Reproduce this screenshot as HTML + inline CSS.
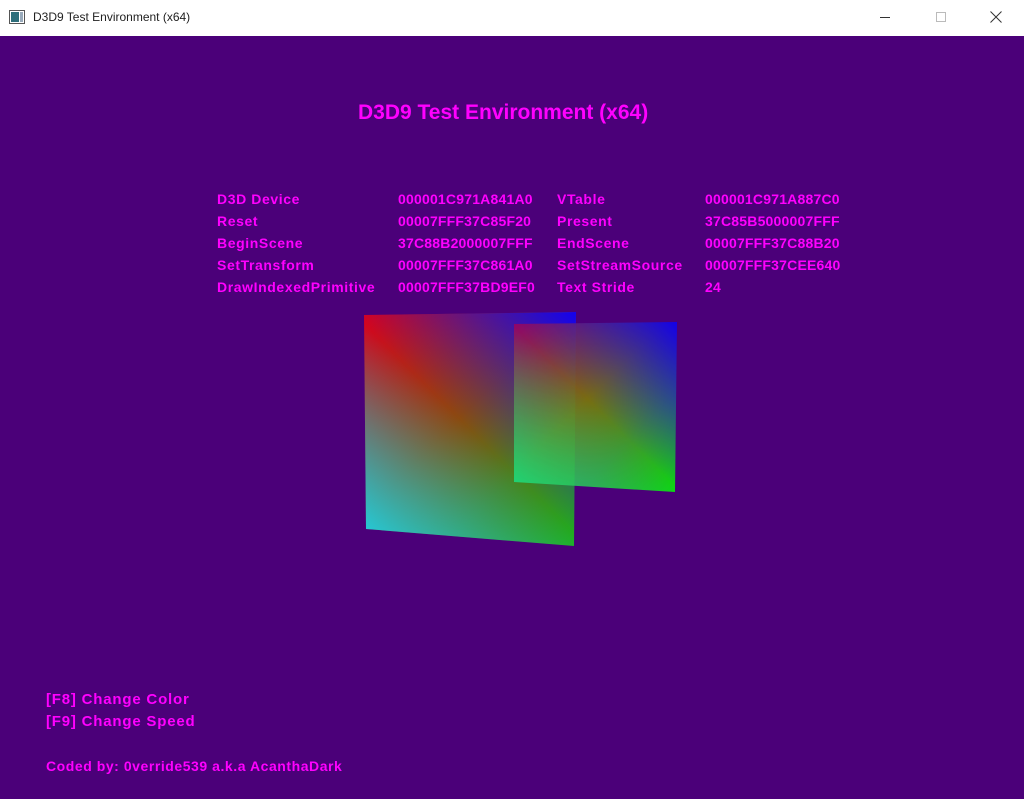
<!DOCTYPE html>
<html><head><meta charset="utf-8"><style>
*{margin:0;padding:0;box-sizing:border-box}
body{width:1024px;height:800px;overflow:hidden;background:#fff;font-family:"Liberation Sans",sans-serif;position:relative}
#tb{position:absolute;left:0;top:0;width:1024px;height:36px;background:#fff}
#tb .t{position:absolute;left:33px;top:10px;font-size:12px;color:#222}
#main{position:absolute;left:0;top:36px;width:1024px;height:763px;background:#4b0079}
.m{position:absolute;color:#ff00ff;font-weight:bold;white-space:nowrap}
.r{font-size:14px;line-height:16px;letter-spacing:0.6px}
.v{font-size:14px;line-height:16px;letter-spacing:0.2px}
.q{position:absolute}
</style></head><body>
<div id="tb">
<svg style="position:absolute;left:9px;top:10px" width="16" height="14"><rect x="0.5" y="0.5" width="15" height="13" fill="#fff" stroke="#555"/><rect x="2" y="2" width="8" height="10" fill="#2e6e7a"/><rect x="11" y="2" width="3" height="10" fill="#9ab"/></svg>
<div class="t">D3D9 Test Environment (x64)</div>
<div style="position:absolute;left:880px;top:17px;width:10px;height:1px;background:#333"></div>
<div style="position:absolute;left:936px;top:12px;width:10px;height:10px;border:1px solid #bbb"></div>
<svg style="position:absolute;left:990px;top:11px" width="12" height="12"><path d="M0.5 0.5L11.5 11.5M11.5 0.5L0.5 11.5" stroke="#333" stroke-width="1"/></svg>
</div>
<div id="main">
<div class="m" style="left:358px;top:64px;font-size:21px;line-height:26px">D3D9 Test Environment (x64)</div>

<div class="m r" style="left:217px;top:155px">D3D Device</div>
<div class="m v" style="left:398px;top:155px">000001C971A841A0</div>
<div class="m r" style="left:557px;top:155px">VTable</div>
<div class="m v" style="left:705px;top:155px">000001C971A887C0</div>

<div class="m r" style="left:217px;top:177px">Reset</div>
<div class="m v" style="left:398px;top:177px">00007FFF37C85F20</div>
<div class="m r" style="left:557px;top:177px">Present</div>
<div class="m v" style="left:705px;top:177px">37C85B5000007FFF</div>

<div class="m r" style="left:217px;top:199px">BeginScene</div>
<div class="m v" style="left:398px;top:199px">37C88B2000007FFF</div>
<div class="m r" style="left:557px;top:199px">EndScene</div>
<div class="m v" style="left:705px;top:199px">00007FFF37C88B20</div>

<div class="m r" style="left:217px;top:221px">SetTransform</div>
<div class="m v" style="left:398px;top:221px">00007FFF37C861A0</div>
<div class="m r" style="left:557px;top:221px">SetStreamSource</div>
<div class="m v" style="left:705px;top:221px">00007FFF37CEE640</div>

<div class="m r" style="left:217px;top:243px">DrawIndexedPrimitive</div>
<div class="m v" style="left:398px;top:243px">00007FFF37BD9EF0</div>
<div class="m r" style="left:557px;top:243px">Text Stride</div>
<div class="m v" style="left:705px;top:243px">24</div>

<div class="q" style="left:364px;top:276px;width:213px;height:235px;clip-path:polygon(0px 3px,212px 0px,210px 234px,2px 217px);
background:linear-gradient(225deg,rgba(20,0,240,1) 0%,rgba(20,0,240,0) 50%),linear-gradient(45deg,rgba(30,210,230,1) 0%,rgba(30,210,230,0) 50%),linear-gradient(135deg,#d80020 0%,#8a4a10 45%,#4a8020 70%,#1cb020 100%)"></div>
<div class="q" style="left:514px;top:286px;width:164px;height:171px;clip-path:polygon(0px 2px,163px 0px,161px 170px,0px 160px);opacity:0.85;
background:linear-gradient(225deg,rgba(10,0,255,1) 0%,rgba(10,0,255,0) 50%),linear-gradient(45deg,rgba(20,230,140,1) 0%,rgba(20,230,140,0) 50%),linear-gradient(135deg,#a00060 0%,#808000 45%,#40b020 70%,#00ff00 100%)"></div>

<div class="m" style="left:46px;top:655px;font-size:15px;line-height:18px;letter-spacing:0.8px">[F8] Change Color</div>
<div class="m" style="left:46px;top:677px;font-size:15px;line-height:18px;letter-spacing:0.8px">[F9] Change Speed</div>
<div class="m r" style="left:46px;top:722px;letter-spacing:0.55px">Coded by: 0verride539 a.k.a AcanthaDark</div>
</div>
</body></html>
